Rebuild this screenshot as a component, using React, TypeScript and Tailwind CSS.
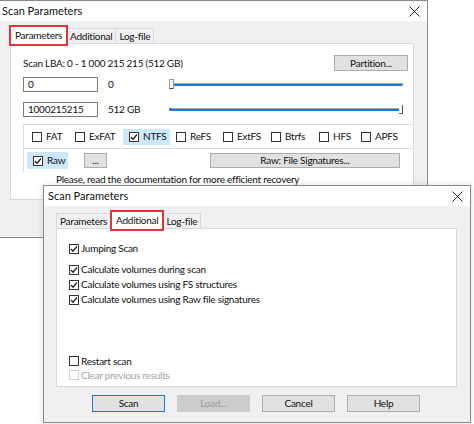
import type { ReactNode } from "react";

const font = "font-['Lato',sans-serif]";

function CloseX() {
  return (
    <svg width="11" height="11" viewBox="0 0 11 11" className="block">
      <path d="M0.5 0.5 L10.5 10.5 M10.5 0.5 L0.5 10.5" stroke="#222" strokeWidth="1" />
    </svg>
  );
}

function Box({ checked, disabled }: { checked?: boolean; disabled?: boolean }) {
  return (
    <span
      className={
        disabled
          ? "flex h-[10px] w-[10px] shrink-0 items-center justify-center border border-[#cfcfcf] bg-white"
          : "flex h-[10px] w-[10px] shrink-0 items-center justify-center border border-[#333] bg-white"
      }
    >
      {checked && (
        <svg width="8" height="8" viewBox="0 0 8 8">
          <path d="M1 4 L3 6.2 L7 1.5" fill="none" stroke="#222" strokeWidth="1.3" />
        </svg>
      )}
    </span>
  );
}

const btnTones = {
  normal: "border-[#adadad] bg-[#e1e1e1] text-[#111]",
  focus: "border-[#1a78d2] bg-[#e1e1e1] text-[#111]",
  disabled: "border-[#cccccc] bg-[#cccccc] text-[#9a9a9a]",
};

function Btn({
  children,
  className,
  tone = "normal",
}: {
  children: ReactNode;
  className: string;
  tone?: keyof typeof btnTones;
}) {
  return (
    <div className={`flex items-center justify-center border ${btnTones[tone]} ${className}`}>{children}</div>
  );
}

function Tab({ label, active }: { label: string; active?: boolean }) {
  if (active) {
    return (
      <div className="relative z-10 -mb-px flex h-[18px] items-center border border-b-0 border-[#d9d9d9] bg-white px-[4px]">
        {label}
        <span className="pointer-events-none absolute -inset-x-[2px] -top-[2px] -bottom-[2px] border-2 border-[#e2343d]" />
      </div>
    );
  }
  return (
    <div className="-ml-px flex h-[15px] items-center border border-b-0 border-[#d9d9d9] bg-[#f0f0f0] px-[3px] first:ml-0">
      {label}
    </div>
  );
}

function Slider({ thumbRight }: { thumbRight?: boolean }) {
  return (
    <div className="relative flex h-[15px] w-[234px] flex-col justify-center">
      <div className="h-px bg-[#a6a6a6]" />
      <div className="h-[2px] bg-[#1a78d2]" />
      {thumbRight ? (
        <>
          <span className="absolute left-0 top-[6px] h-[3px] w-[3px] border-l border-t border-[#777]" />
          <span className="absolute right-0 top-[3px] h-[9px] w-[4px] border-b border-r border-[#555] bg-white" />
        </>
      ) : (
        <>
          <span className="absolute left-0 top-[2px] h-[10px] w-[5px] border border-[#999] border-b-[#444] bg-[#f4f4f4]" />
          <span className="absolute right-0 top-[6px] h-[3px] w-[2px] border-r border-[#999]" />
        </>
      )}
    </div>
  );
}

function Window({
  className,
  tabs,
  active,
  children,
  panelClass,
  footer,
}: {
  className: string;
  tabs: string[];
  active: number;
  children: ReactNode;
  panelClass: string;
  footer?: ReactNode;
}) {
  return (
    <div className={`absolute flex flex-col border border-[#8a8a8a] bg-[#f0f0f0] ${className}`}>
      <div className="flex h-[20px] shrink-0 items-center justify-between bg-white pl-[4px] pr-[7px]">
        <span className="text-[11px] tracking-normal">Scan Parameters</span>
        <CloseX />
      </div>
      <div className="flex flex-col pl-[12px] pr-[13px] pt-[5px]">
        <div className="flex items-end">
          {tabs.map((t, i) => (
            <Tab key={t} label={t} active={i === active} />
          ))}
        </div>
        <div className={`border border-[#d9d9d9] bg-white ${panelClass}`}>{children}</div>
        {footer}
      </div>
    </div>
  );
}

const fsItems = [
  { label: "FAT", w: "w-[43px]" },
  { label: "ExFAT", w: "w-[54px]" },
  { label: "NTFS", w: "w-[47px]", on: true },
  { label: "ReFS", w: "w-[47px]" },
  { label: "ExtFS", w: "w-[48px]" },
  { label: "Btrfs", w: "w-[48px]" },
  { label: "HFS", w: "w-[42px]" },
  { label: "APFS", w: "w-[45px]" },
];

function ParamsPanel() {
  return (
    <div className="flex flex-col pl-[12px]">
      <div className="mt-[11px] flex h-[16px] items-center justify-between pr-[5px]">
        <span>Scan LBA: 0 - 1 000 215 215 (512 GB)</span>
        <Btn className="h-[16px] w-[74px]">Partition...</Btn>
      </div>
      <div className="mt-[6px] flex h-[15px] items-center">
        <div className="flex h-[15px] w-[75px] items-center border border-[#7a7a7a] pl-[4px]">0</div>
        <span className="w-[71px] pl-[10px]">0</span>
        <Slider />
      </div>
      <div className="mt-[10px] flex h-[15px] items-center">
        <div className="flex h-[15px] w-[75px] items-center border border-[#7a7a7a] pl-[4px]">1000215215</div>
        <span className="w-[71px] pl-[10px]">512 GB</span>
        <Slider thumbRight />
      </div>
      <div className="mt-[7px] flex flex-col border-l border-t border-[#dcdcdc]">
        <div className="flex h-[23px] items-center pl-[2px]">
          {fsItems.map((f) => (
            <div
              key={f.label}
              className={`flex h-[16px] items-center gap-[4px] pl-[6px] ${f.w} ${f.on ? "bg-[#cce8ff]" : ""}`}
            >
              <Box checked={f.on} />
              <span>{f.label}</span>
            </div>
          ))}
        </div>
        <div className="flex h-[24px] items-center border-t border-[#dcdcdc] pl-[3px]">
          <div className="flex h-[17px] w-[41px] items-center gap-[4px] bg-[#cce8ff] pl-[6px]">
            <Box checked />
            <span>Raw</span>
          </div>
          <Btn className="ml-[16px] h-[15px] w-[23px]">...</Btn>
          <Btn className="ml-[103px] h-[15px] w-[190px]">Raw: File Signatures...</Btn>
        </div>
      </div>
      <div className="pl-[33px] leading-[14px]">Please, read the documentation for more efficient recovery</div>
    </div>
  );
}

function CheckRow({
  label,
  checked,
  disabled,
  h = "h-[15px]",
}: {
  label: string;
  checked?: boolean;
  disabled?: boolean;
  h?: string;
}) {
  return (
    <div className={`flex items-center gap-[2px] ${h} ${disabled ? "text-[#a3a3a3]" : ""}`}>
      <Box checked={checked} disabled={disabled} />
      <span>{label}</span>
    </div>
  );
}

function AdditionalPanel() {
  return (
    <div className="flex h-full flex-col pl-[12px] pt-[12px]">
      <CheckRow label="Jumping Scan" checked />
      <div className="mt-[6px]">
        <CheckRow label="Calculate volumes during scan" checked />
        <CheckRow label="Calculate volumes using FS structures" checked />
        <CheckRow label="Calculate volumes using Raw file signatures" checked />
      </div>
      <div className="mt-auto pb-[4px]">
        <CheckRow label="Restart scan" h="h-[14px]" />
        <CheckRow label="Clear previous results" disabled h="h-[14px]" />
      </div>
    </div>
  );
}

export default function App() {
  return (
    <div
      className={`relative h-[424px] w-[474px] overflow-hidden bg-white text-[10px] tracking-[-0.25px] text-[#111] ${font}`}
    >
      <Window
        className="-left-[3px] top-0 h-[238px] w-[431px]"
        tabs={["Parameters", "Additional", "Log-file"]}
        active={0}
        panelClass="h-[157px]"
      >
        <ParamsPanel />
      </Window>
      <Window
        className="left-[43px] top-[185px] h-[238px] w-[428px] shadow-[0_0_6px_rgba(0,0,0,0.15)]"
        tabs={["Parameters", "Additional", "Log-file"]}
        active={1}
        panelClass="h-[159px]"
        footer={
          <div className="flex gap-[12px] pl-[36px] pt-[8px]">
            <Btn className="h-[17px] w-[73px]" tone="focus">
              Scan
            </Btn>
            <Btn className="h-[17px] w-[73px]" tone="disabled">
              Load...
            </Btn>
            <Btn className="h-[17px] w-[73px]">Cancel</Btn>
            <Btn className="h-[17px] w-[73px]">Help</Btn>
          </div>
        }
      >
        <AdditionalPanel />
      </Window>
    </div>
  );
}
